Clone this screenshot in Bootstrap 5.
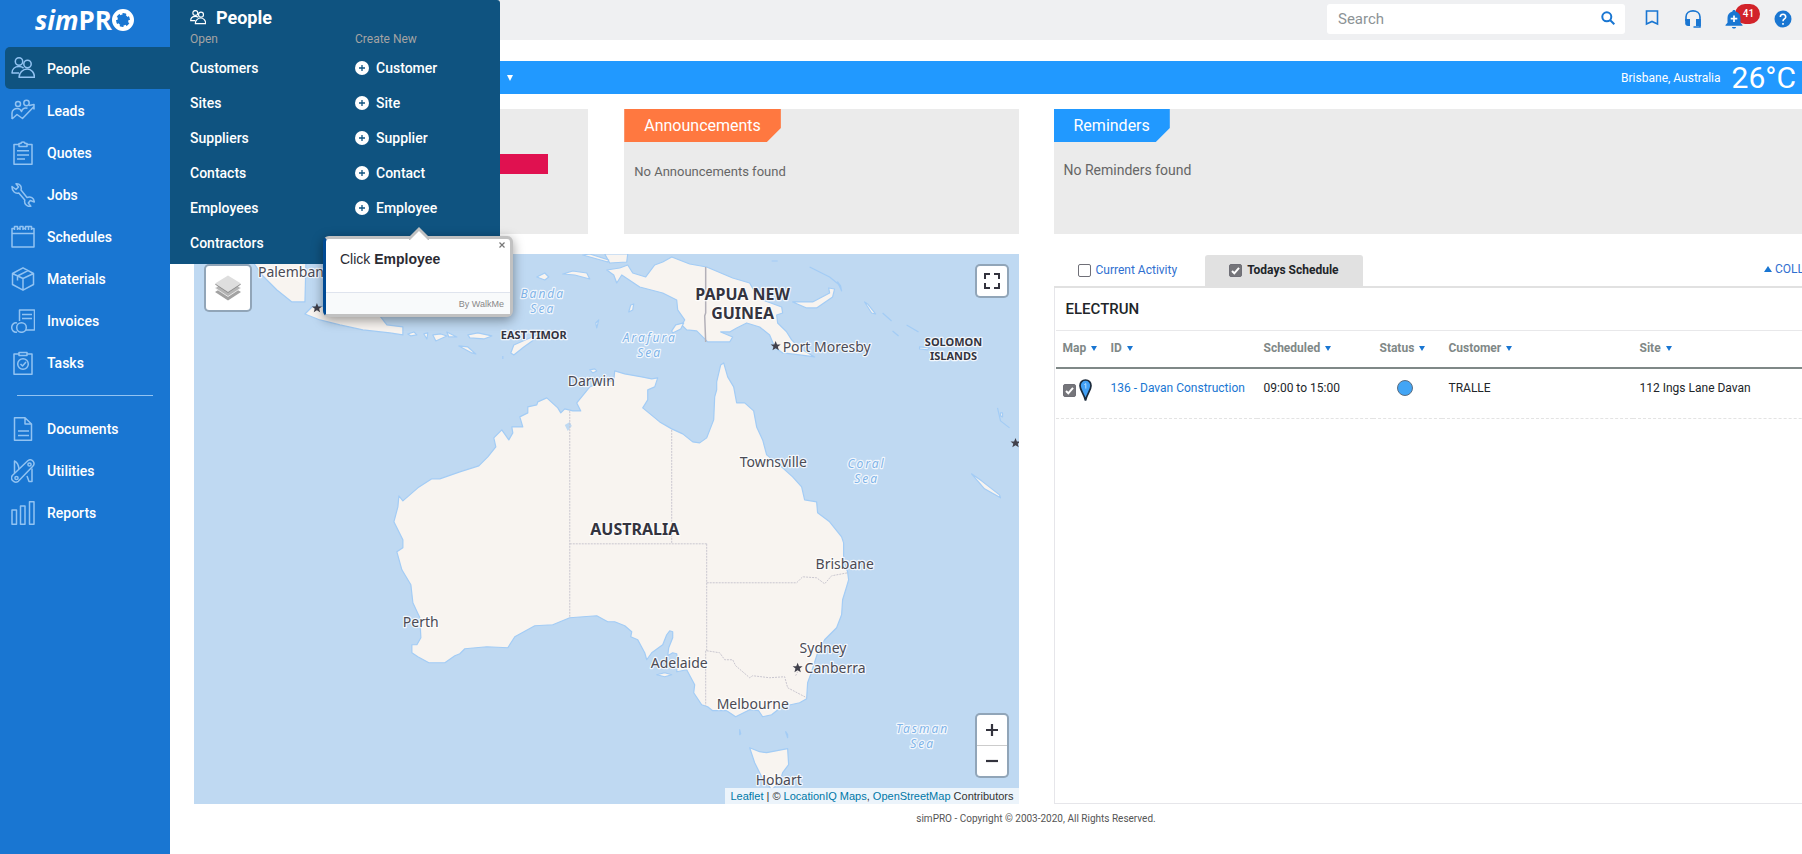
<!DOCTYPE html>
<html lang="en">
<head>
<meta charset="utf-8">
<meta name="viewport" content="width=device-width, initial-scale=1">
<title>simPRO - People</title>
<link href="https://cdn.jsdelivr.net/npm/bootstrap@5.3.0/dist/css/bootstrap.min.css" rel="stylesheet">
<style>
  :root { --sp-blue: #1976d2; --sp-sky: #2199ff; --sp-navy: #0f5380; --sp-grey: #ebebeb; }
  body { font-family: Roboto, sans-serif; font-size: 12px; line-height: 18px; color: #212529; background: #fff; overflow: hidden; }
  a { text-decoration: none; color: var(--sp-blue); }

  /* sidebar */
  .side { width: 170px; background: var(--sp-blue); z-index: 5; }
  .brand-link { height: 47px; padding: 0 0 8px 35px; color: #fff; font: 700 26px/32px "Open Sans", sans-serif; }
  .brand-link svg { width: 22px; height: 22px; }
  .side-nav a { height: 42px; margin-left: 5px; padding: 2px 0 0 6px; gap: 12px; color: #fff; font-size: 14px; font-weight: 500; border-radius: 5px 0 0 5px; }
  .side-nav a.active { background: var(--sp-navy); }
  .side-nav svg { width: 24px; height: 24px; fill: none; stroke: #92c3f2; stroke-width: 1.5; stroke-linejoin: round; }
  .side-rule { height: 1px; margin: 12px 17px 11px; background: #92c3f2; opacity: 1; border: 0; }

  /* flyout */
  .flyout { left: 100%; top: 0; width: 330px; padding: 3px 0 4px 20px; background: var(--sp-navy); color: #fff; border-radius: 0 3px 0 0; }
  .flyout h2 { height: 29px; font-size: 18px; font-weight: 700; gap: 10px; }
  .flyout h2 svg { width: 16px; height: 16px; fill: none; stroke: #fff; stroke-width: 1.8; }
  .flyout-cols { grid-template-columns: 165px 1fr; }
  .flyout h3 { font-size: 12px; line-height: 14px; font-weight: 400; color: #a5a3a3; margin-bottom: 4px; }
  .flyout li a { height: 35px; color: #fff; font-size: 14px; font-weight: 500; gap: 7px; }
  .flyout li svg { width: 14px; height: 14px; }

  /* callout */
  .callout-tip { left: 153px; top: 236px; width: 190px; border: 3px solid #c1c1c1; border-left-color: #004a94; border-radius: 6px; background: #fff; box-shadow: 0 3px 12px rgba(0,0,0,.4); color: #2b2b33; font-family: "Liberation Sans", sans-serif; }
  .callout-tip p { font-size: 14px; line-height: 20px; height: 53px; padding: 10px 14px 0; }
  .callout-tip footer { height: 22px; line-height: 22px; font-size: 9px; padding-right: 6px; color: #888; background: #f8fafb; border-top: 1px solid #dfe4ee; }
  .callout-arrow { left: 83px; top: -13px; width: 20px; height: 14px; }
  .callout-close { right: 3px; top: 1px; width: 10px; height: 10px; color: #777; }

  /* top */
  .topbar { height: 40px; background: #eff0f2; padding-right: 10px; }
  .search-box { width: 298px; height: 30px; margin: 4px 18px 6px 0; background: #fff; border-radius: 3px; padding: 0 10px 0 11px; }
  .search-box input { font-size: 15px; height: 28px; color: #555; }
  .search-box button { margin-bottom: 3px; }
  .search-box input::placeholder { color: #8c9396; opacity: 1; }
  .search-box input:focus { outline: 0; }
  .tools { padding-top: 10px; gap: 23px; }
  .tool-btn { width: 18px; height: 20px; color: var(--sp-blue); }
  .tool-btn svg { width: 18px; height: 20px; display: block; }
  .bell-btn { margin-right: 8px; }
  .count-badge { left: 10px; top: -6px; width: 25px; height: 20px; padding: 0 0 0 2px; line-height: 20px; font-size: 10px; font-weight: 500; border-radius: 10px; background: #d2232a; color: #fff; text-align: center; }
  .weather { height: 33px; margin-top: 21px; background: var(--sp-sky); color: #fff; padding: 0 6px 0 337px; }
  .weather .temp { font-size: 30px; line-height: 33px; margin-left: 11px; }

  /* the dashboard runs on past the right edge of the window */
  .board { margin-right: -100px; padding: 15px 24px 0; }
  .board-halves { grid-template-columns: 1fr 1fr; column-gap: 35px; row-gap: 20px; }
  .board-pair { grid-template-columns: 1fr 1fr; column-gap: 36px; }
  .tile { height: 125px; background: var(--sp-grey); }
  .tile h2 { height: 33px; font-size: 16px; line-height: 33px; font-weight: 400; color: #fff; padding: 0 20px; clip-path: polygon(0 0, 100% 0, 100% 19px, calc(100% - 14px) 100%, 0 100%); }
  .tile p { color: #666; padding: 20px 10px 0; font-size: 13px; line-height: 20px; }
  .tile .wide-note { font-size: 14px; padding-top: 18px; }
  .tag-orange { background: #ff7840; } .tag-sky { background: var(--sp-sky); }
  .alert-strip { height: 20px; margin: 45px 40px 0; background: #e01150; }

  /* map */
  .map-box { aspect-ratio: 3 / 2; background: #bfd9f2; overflow: hidden; }
  .map-box > svg { width: 100%; height: 100%; display: block; font-family: "Noto Sans", sans-serif; }
  .land { fill: #f8f4f0; stroke: #a3ccf5; stroke-width: 1.2; stroke-linejoin: round; }
  .border-line { fill: none; stroke: #c9c6cf; stroke-width: 1; stroke-dasharray: 2 1; }
  .lbl { font-size: 14px; fill: #4b4b55; paint-order: stroke; stroke: rgba(255,255,255,.8); stroke-width: 2.4px; stroke-linejoin: round; }
  .lbl-c { text-anchor: middle; font-weight: 700; fill: #34343f; }
  .lbl-big { font-size: 16px; } .lbl-small { font-size: 11px; }
  .lbl-sea { font-size: 12px; font-style: italic; text-anchor: middle; fill: #7fb4e9; letter-spacing: 2px; }
  .map-ctl { border: 2px solid rgba(0,0,0,.24); background-clip: padding-box; background-color: #fff; border-radius: 5px; color: #33333d; }
  .map-ctl svg { display: block; margin: auto; }
  .ctl-layers { left: 10px; top: 10px; width: 48px; height: 48px; }
  .ctl-full { right: 10px; top: 10px; width: 34px; height: 34px; }
  .ctl-zoom { right: 10px; bottom: 26px; width: 34px; }
  .ctl-zoom button { height: 30px; background: none; color: inherit; }
  .ctl-zoom button + button { height: 31px; border-top: 1px solid #ccc !important; }
  .map-credit { right: 0; bottom: 0; height: 16px; line-height: 16px; padding: 0 5px; background: rgba(255,255,255,.7); font-family: "Liberation Sans", sans-serif; font-size: 11px; color: #333; white-space: nowrap; }
  .map-credit a { color: #0078a8; }

  /* schedule */
  .tabs-row { height: 34px; padding-top: 1px; border-bottom: 2px solid #e1e1e1; }
  .tab-item { padding: 0 24px 1px; gap: 5px; font-size: 12px; color: #2f6fd0; }
  .tab-item.on { background: #e1e1e1; color: #212529; font-weight: 700; border-radius: 3px 3px 0 0; }
  .tick { appearance: none; width: 13px; height: 13px; margin: 0; border: 1px solid #6f6f77; border-radius: 2px; background: #fff; flex: none; }
  .tick:checked { background: #75757a url("data:image/svg+xml,%3Csvg xmlns='http://www.w3.org/2000/svg' viewBox='0 0 11 11'%3E%3Cpath d='M2 6l2.3 2.3L9 2.8' fill='none' stroke='%23fff' stroke-width='2'/%3E%3C/svg%3E") center / 11px no-repeat; }
  .collapse-link { width: 114px; padding-top: 5px; color: #2f6fd0; }
  .tri-dn, .tri-up { display: inline-block; border: 3px solid transparent; border-width: 0 3px; }
  .tri-dn { border-top: 5px solid #1976d2; margin-left: 5px; vertical-align: 1px; }
  .tri-up { border-width: 0 4px 6px; border-bottom-color: #1976d2; margin-right: 3px; vertical-align: 1px; }
  .tri-white { border-top-color: #fff; border-top-width: 6px; }
  .sched { border: 1px solid #e6e6ea; border-top: 0; padding-left: 1px; }
  .sched h2 { font-size: 15px; line-height: 42px; font-weight: 500; padding-left: 10px; border-bottom: 1px solid #e8e8ea; }
  .sched table { table-layout: fixed; }
  .sched th { height: 37px; padding: 0 0 2px 7px; font-weight: 700; color: #7f8887; border-bottom: 2px solid #7f8887; }
  .sched td { height: 50px; padding: 10px 0 0 7px; vertical-align: top; border-bottom: 1px dashed #e3e3e3; }
  .sched td svg { display: block; }
  .pin { margin-left: 3px; }
  .foot { padding-top: 7px; font-size: 10px; line-height: 16px; color: #555; }
</style>
</head>
<body class="min-vh-100 d-flex">

<nav class="side position-relative flex-shrink-0" aria-label="Main">
  <a class="brand-link d-flex align-items-center" href="#"><em>sim</em><span>PR</span><svg viewBox="0 0 22 22" fill="none" stroke="#fff"><circle cx="11" cy="11" r="9" stroke-width="4"/><circle cx="11" cy="11" r="7" stroke-width="3" stroke-dasharray="3 4.3"/></svg></a>
  <div class="side-nav">
    <a class="active d-flex align-items-center" href="#"><svg viewBox="0 0 24 24"><circle cx="8" cy="4.500" r="3.700"/><circle cx="16.500" cy="7" r="3.700"/><path d="M8 16H1c0-4 3-6.500 7-6.500 2 0 3.500.6 4.600 1.600M8 20.300h15.500c0-4.500-3-8.300-7.300-8.300S8 15.800 8 20.300z"/></svg>People</a>
    <a class="d-flex align-items-center" href="#"><svg viewBox="0 0 24 24"><circle cx="7" cy="5" r="2.500"/><circle cx="15.500" cy="4" r="2.700"/><path d="M1 20v-6c0-3 3-4.500 5-4.500 3 0 4 1.500 4.500 3 1-3 3.500-4 6-3.300M1 20l5-4.500 5.500 4L23 7.500M18 6.500l5-1v5"/></svg>Leads</a>
    <a class="d-flex align-items-center" href="#"><svg viewBox="0 0 24 24"><path d="M8 3.500H3v19.700h18V3.500h-5M8 5.500h8v-3h-2C14 .5 10 .5 10 2.500H8zM6 9.800h12M6 14h12M6 18h8"/></svg>Quotes</a>
    <a class="d-flex align-items-center" href="#"><svg viewBox="0 0 24 24"><path d="M1 3.500l4 3 2.500-2.500L5 .8C9 .5 11 3.500 10 7l6 7.500c3.500-1.500 7 .5 7.300 4.500l-4-1.500-2 2.500 2.500 3.300c-4 .7-7-2.500-6-6.300l-6-7C4 11 .8 8 1 3.500z"/></svg>Jobs</a>
    <a class="d-flex align-items-center" href="#"><svg viewBox="0 0 24 24"><path d="M3.500 3.500H1V22h22V3.500h-2.500M1 8.500h22M3.500 5V1.500h3V5M6.500 3.500H9M9 5V1.500h3V5M12 3.500h2.500M14.500 5V1.500h3V5M17.500 5V1.500h3V5"/></svg>Schedules</a>
    <a class="d-flex align-items-center" href="#"><svg viewBox="0 0 24 24"><path d="M12 .8l10.500 5.700v11L12 23.200 1.500 17.500v-11zM1.500 6.500L12 11.500l10.500-5M12 11.500v11.700M6.500 9L17 3.700M6.500 9v4.500"/></svg>Materials</a>
    <a class="d-flex align-items-center" href="#"><svg viewBox="0 0 24 24"><path d="M8.500 12V1h15v20H15M11 5.500h10M11 9.500h10"/><circle cx="10.500" cy="18.500" r="4.800"/><path d="M6 14c-3-.8-5.300 1.500-5.300 4.500s2.300 5.300 5.300 4.500"/></svg>Invoices</a>
    <a class="d-flex align-items-center" href="#"><svg viewBox="0 0 24 24"><path d="M8 3H3v20.200h18V3h-5M8 4.500h8v-3H8z"/><circle cx="12" cy="13" r="5.300"/><path d="M9.500 13l2 2 3.500-4"/></svg>Tasks</a>
    <hr class="side-rule">
    <a class="d-flex align-items-center" href="#"><svg viewBox="0 0 24 24"><path d="M3.500.8H14L20.500 7v16.200h-17zM14 .8V7h6.500M7 14h11M7 18.500h11"/></svg>Documents</a>
    <a class="d-flex align-items-center" href="#"><svg viewBox="0 0 24 24"><path d="M1.300 16.500L16.500 2c4-3.500 8.500 2 5.300 5.300L7.300 22.300c-4 2.700-8.500-2-6-5.800z"/><circle cx="18.500" cy="5.500" r="1.600"/><circle cx="5.500" cy="19" r="1.600"/><path d="M3.500 14V2c2.500 1 4 4 4.500 8M21 9.500v13h-3l-2-5.500"/></svg>Utilities</a>
    <a class="d-flex align-items-center" href="#"><svg viewBox="0 0 24 24"><path d="M1 9h4.500v14.200H1zM9.500 5H14v18.200H9.500zM18.500.8H23v22.400h-4.500z"/></svg>Reports</a>
  </div>

  <section class="flyout position-absolute">
    <h2 class="d-flex align-items-center m-0"><svg viewBox="0 0 24 24"><circle cx="8" cy="4.500" r="3.700"/><circle cx="16.500" cy="7" r="3.700"/><path d="M8 16H1c0-4 3-6.500 7-6.500 2 0 3.500.6 4.600 1.600M8 20.300h15.500c0-4.500-3-8.300-7.300-8.300S8 15.800 8 20.300z"/></svg>People</h2>
    <div class="flyout-cols d-grid">
      <div>
        <h3>Open</h3>
        <ul class="list-unstyled m-0">
          <li><a class="d-flex align-items-center" href="#">Customers</a></li>
          <li><a class="d-flex align-items-center" href="#">Sites</a></li>
          <li><a class="d-flex align-items-center" href="#">Suppliers</a></li>
          <li><a class="d-flex align-items-center" href="#">Contacts</a></li>
          <li><a class="d-flex align-items-center" href="#">Employees</a></li>
          <li><a class="d-flex align-items-center" href="#">Contractors</a></li>
        </ul>
      </div>
      <div>
        <h3>Create New</h3>
        <ul class="list-unstyled m-0">
          <li><a class="d-flex align-items-center" href="#"><svg viewBox="0 0 14 14"><circle cx="7" cy="7" r="7" fill="#fff"/><path d="M7 4v6M4 7h6" stroke="#0f5380" stroke-width="1.300"/></svg>Customer</a></li>
          <li><a class="d-flex align-items-center" href="#"><svg viewBox="0 0 14 14"><circle cx="7" cy="7" r="7" fill="#fff"/><path d="M7 4v6M4 7h6" stroke="#0f5380" stroke-width="1.300"/></svg>Site</a></li>
          <li><a class="d-flex align-items-center" href="#"><svg viewBox="0 0 14 14"><circle cx="7" cy="7" r="7" fill="#fff"/><path d="M7 4v6M4 7h6" stroke="#0f5380" stroke-width="1.300"/></svg>Supplier</a></li>
          <li><a class="d-flex align-items-center" href="#"><svg viewBox="0 0 14 14"><circle cx="7" cy="7" r="7" fill="#fff"/><path d="M7 4v6M4 7h6" stroke="#0f5380" stroke-width="1.300"/></svg>Contact</a></li>
          <li><a class="d-flex align-items-center" href="#"><svg viewBox="0 0 14 14"><circle cx="7" cy="7" r="7" fill="#fff"/><path d="M7 4v6M4 7h6" stroke="#0f5380" stroke-width="1.300"/></svg>Employee</a></li>
        </ul>
      </div>
    </div>
    <div class="callout-tip position-absolute" role="dialog" aria-label="Hint">
      <svg class="callout-arrow position-absolute" viewBox="0 0 20 14"><path d="M0 11L10 1l10 10v3H0z" fill="#c1c1c1"/><path d="M1 14L10 5l9 9z" fill="#fff"/></svg>
      <button class="callout-close position-absolute border-0 bg-transparent p-0 d-flex" type="button" aria-label="Close"><svg class="m-auto" width="6" height="6" viewBox="0 0 6 6"><path d="M.5.5l5 5m0-5l-5 5" stroke="currentColor" stroke-width="1.200"/></svg></button>
      <p class="m-0">Click <b>Employee</b></p>
      <footer class="text-end">By WalkMe</footer>
    </div>
  </section>
</nav>

<div class="flex-grow-1 overflow-hidden">
  <header class="topbar d-flex justify-content-end">
    <form class="search-box d-flex align-items-center">
      <input class="border-0 bg-transparent p-0 flex-grow-1" type="text" placeholder="Search" aria-label="Search">
      <button class="border-0 bg-transparent p-0 d-flex" type="button" aria-label="Search"><svg width="14" height="14" viewBox="0 0 14 14" fill="none" stroke="#1976d2" stroke-width="2"><circle cx="5.800" cy="5.800" r="4.500"/><path d="M9 9l4.300 4.300"/></svg></button>
    </form>
    <div class="tools d-flex align-items-start">
      <button class="tool-btn border-0 bg-transparent p-0" type="button" aria-label="Bookmarks"><svg viewBox="0 0 18 20"><path d="M3.500 1h11v13L9 11.500 3.500 14z" fill="none" stroke="currentColor" stroke-width="1.600"/></svg></button>
      <button class="tool-btn border-0 bg-transparent p-0" type="button" aria-label="Support"><svg viewBox="0 0 18 20" fill="none" stroke="currentColor" stroke-width="1.600"><path d="M2 11V7C2-1.200 16-1.200 16 7v10H9.500"/><path d="M1.200 9H6v7H4c-1.600 0-2.800-1-2.800-2.500zM12 9h4.800v7H12z" fill="currentColor" stroke="none"/></svg></button>
      <button class="tool-btn bell-btn border-0 bg-transparent p-0 position-relative" type="button" aria-label="Notifications"><span class="count-badge position-absolute">41</span><svg class="position-relative" viewBox="0 0 18 20"><path d="M9 0c1 0 1.600.7 1.600 1.500C14 2.300 15.500 5 15.500 8v4.800L17.500 15v.8H.5V15l2-2.200V8c0-3 1.500-5.700 4.900-6.500C7.400.7 8 0 9 0zM7 17h4c0 2-4 2-4 0z" fill="currentColor"/><path d="M9 5.500v6.500M5.700 8.700h6.600" stroke="#fff" stroke-width="1.700"/></svg></button>
      <button class="tool-btn border-0 bg-transparent p-0" type="button" aria-label="Help"><svg viewBox="0 0 18 20"><circle cx="9" cy="9" r="8.500" fill="currentColor"/><path d="M6.300 7c0-3.600 5.400-3.600 5.400 0 0 2-2.700 2-2.700 4.200M9 13v1.800" fill="none" stroke="#fff" stroke-width="1.600"/></svg></button>
    </div>
  </header>

  <div class="weather d-flex align-items-center">
    <button class="border-0 bg-transparent p-0 d-flex" type="button" aria-label="Choose dashboard"><span class="tri-dn tri-white m-0"></span></button>
    <span class="ms-auto">Brisbane, Australia</span>
    <span class="temp">26°C</span>
  </div>

  <main class="board">
    <div class="board-halves d-grid">
      <div class="board-pair d-grid">
        <section class="tile overflow-hidden"><div class="alert-strip"></div></section>
        <section class="tile"><h2 class="tag-orange d-inline-block m-0 align-top">Announcements</h2><p class="m-0">No Announcements found</p></section>
      </div>
      <section class="tile"><h2 class="tag-sky d-inline-block m-0 align-top">Reminders</h2><p class="wide-note m-0">No Reminders found</p></section>

      <section class="map-box position-relative" aria-label="Map">
        <svg viewBox="194 254 825 550" preserveAspectRatio="xMidYMid slice">
          <g class="land">
            <path d="M590 387L586 392 577 403 581 411 573 411 565 409 561 413 558 408 547 398 538 402 537 405 528 407 528 413 520 417 523 427 512 427 513 433 509 440 502 430 494 438 496 447 488 457 479 466 460 472 440 479 432 479 418 488 403 501 399 496 398 507 394 522 403 540 403 548 397 552 402 570 411 585 413 603 420 618 421 638 417 645 412 645 412 653 418 657 429 663 445 663 455 656 460 654 465 649 487 647 508 648 515 637 535 626 553 625 570 618 597 616 608 622 615 622 625 626 632 632 631 637 638 640 645 653 647 660 652 653 663 645 667 635 670 631 673 632 673 638 669 648 668 656 673 653 677 654 678 662 677 672 687 670 695 685 694 693 702 705 708 707 713 711 727 711 736 717 750 710 759 711 763 717 772 715 782 707 800 703 807 699 808 683 812 672 818 653 825 640 837 628 842 615 843 600 847 587 849 580 848 572 844 562 844 543 842 537 830 522 818 513 817 502 805 500 802 487 793 477 783 468 767 455 763 440 757 427 754 411 745 403 737 403 734 387 728 377 724 363 721 365 717 382 717 390 715 397 714 420 707 438 700 443 693 442 683 434 672 429 660 422 643 408 648 400 648 390 655 387 658 378 652 379 642 377 625 374 615 371 614 381 602 382z"/>
            <path d="M607 270L620 268 628 265 633 273 646 277 655 265 663 262 672 257 690 264 707 267 733 278 750 283 754 290 763 300 782 307 783 313 777 315 778 323 787 332 792 340 800 348 815 357 800 355 783 353 775 347 770 335 760 327 747 323 737 328 730 332 721 332 733 337 730 342 708 342 697 331 687 330 682 325 685 320 678 310 677 300 663 293 640 287 628 279 622 275 617 283 614 275z"/>
            <path d="M793 302L813 302 830 293 829 288 835 289 833 297 817 308 807 308zM605 254H628L627 262 610 263zM672 331L676 325 684 323 681 329 673 333zM629 312L631 305 634 304 633 310zM865 302L868 304 876 314 872 313zM838 282L841 286 842 291zM920 347L930 348 928 350 920 349z"/>
            <path d="M253 262L262 275 277 290 292 302 305 302 306 262zM305 314L312 307 330 306 380 316 387 325 403 327 403 335 390 333 363 330 340 325 320 320zM408 334L414 332 417 335 411 336zM424 334L428 333 427 339zM433 335L441 334 447 336 436 341zM447 332L453 335 457 337 449 337zM468 335L478 333 492 336 484 339 470 338zM459 346L468 347 476 354 472 353zM511 353L514 345 530 338 545 332 524 347 514 355zM537 277L545 273 549 277 545 280zM563 274L573 271 587 273 590 279 575 275zM596 323L599 320 597 328zM590 370L595 369 597 371 593 373zM583 255L590 254 609 260 608 262z"/>
            <path d="M750 748L760 752 767 753 788 749 789 765 783 773 780 783 772 790 762 777 755 763zM657 675L665 673 672 675 665 677zM972 474L982 481 1000 495 1001 498 985 489zM1001 413L1003 413 1003 417 1001 416zM786 732L788 735 788 738zM740 730L741 734 740 735z"/>
            <path d="M810 267L830 277 841 286M883 313L892 321M907 325L919 332M893 331L899 336M998 408L1001 421 1010 428M503 356V359M772 261H778" fill="none"/>
          </g>
          <g fill="#bfd9f2"><path d="M565 425l5-3 2 4-4 5zM505 410l6-2-3 5z"/></g>
          <path class="border-line" d="M570 411V618M570 544H707M672 430V544M707 544V651M706 651V706M707 583H797L803 577 817 578 825 584 832 576 848 573M707 651L720 653 725 660 733 660 736 666 750 678 753 676 770 678 785 677 788 688 807 698M796 676L798 672"/>
          <path d="M706 267V313L705 316 706 342" fill="none" stroke="#b3b0b8" stroke-width="1.500"/>
          <g class="lbl">
            <text x="258" y="277">Palembang</text><text x="568" y="386">Darwin</text><text x="783" y="352">Port Moresby</text>
            <text x="740" y="467">Townsville</text><text x="816" y="569">Brisbane</text><text x="800" y="653">Sydney</text>
            <text x="805" y="673">Canberra</text><text x="717" y="709">Melbourne</text><text x="651" y="668">Adelaide</text>
            <text x="403" y="627">Perth</text><text x="756" y="785">Hobart</text>
          </g>
          <g class="lbl lbl-c lbl-big"><text x="743" y="300">PAPUA NEW</text><text x="743" y="319">GUINEA</text><text x="635" y="535">AUSTRALIA</text></g>
          <g class="lbl lbl-c lbl-small"><text x="534" y="339">EAST TIMOR</text><text x="954" y="346">SOLOMON</text><text x="954" y="360">ISLANDS</text></g>
          <g class="lbl lbl-sea"><text x="543" y="298">Banda</text><text x="543" y="313">Sea</text><text x="650" y="342">Arafura</text><text x="650" y="357">Sea</text><text x="867" y="468">Coral</text><text x="867" y="483">Sea</text><text x="923" y="733">Tasman</text><text x="923" y="748">Sea</text></g>
          <defs><path id="star" d="M0-5L1.400-1.500 5-1.400 2.200.8 3.200 4.400 0 2.400-3.200 4.400-2.200.8-5-1.400-1.400-1.500z" fill="#41414c"/></defs>
          <use href="#star" x="317" y="308"/><use href="#star" x="776" y="346"/><use href="#star" x="798" y="668"/><use href="#star" x="1016" y="443"/>
        </svg>
        <button class="map-ctl ctl-layers position-absolute p-0" type="button" aria-label="Layers"><svg width="28" height="28" viewBox="0 0 28 28"><path d="M1 18l13-8 13 8-13 8.500z" fill="#a2a2a2"/><path d="M1 14l13-8 13 8-13 8.500z" fill="#b4b4b4" stroke="#f4f4f4" stroke-width=".8"/><path d="M1 10.500L14 2.500l13 8L14 19z" fill="#8d8d8d"/><path d="M1 9.500L14 1.500l13 8L14 18z" fill="#dedede"/></svg></button>
        <button class="map-ctl ctl-full position-absolute p-0" type="button" aria-label="Full screen"><svg width="16" height="16" viewBox="0 0 16 16" fill="none" stroke="currentColor" stroke-width="2"><path d="M1 6V1h5M10 1h5v5M15 10v5h-5M6 15H1v-5"/></svg></button>
        <div class="map-ctl ctl-zoom position-absolute d-flex flex-column">
          <button class="border-0 p-0" type="button" aria-label="Zoom in"><svg width="12" height="12" viewBox="0 0 12 12"><path d="M6 0v12M0 6h12" stroke="currentColor" stroke-width="2.200"/></svg></button>
          <button class="border-0 p-0" type="button" aria-label="Zoom out"><svg width="12" height="12" viewBox="0 0 12 12"><path d="M0 6h12" stroke="currentColor" stroke-width="2.200"/></svg></button>
        </div>
        <div class="map-credit position-absolute"><a href="#">Leaflet</a> | © <a href="#">LocationIQ Maps</a>, <a href="#">OpenStreetMap</a> Contributors</div>
      </section>

      <section class="d-flex flex-column">
        <div class="tabs-row d-flex">
          <label class="tab-item d-flex align-items-center"><input class="tick" type="checkbox">Current Activity</label>
          <label class="tab-item on d-flex align-items-center ms-1"><input class="tick" type="checkbox" checked>Todays Schedule</label>
          <a class="collapse-link ms-auto text-nowrap" href="#"><span class="tri-up"></span>COLLAPSE</a>
        </div>
        <div class="sched flex-grow-1">
          <h2 class="m-0">ELECTRUN</h2>
          <table class="w-100">
            <colgroup><col style="width:48px"><col style="width:153px"><col style="width:116px"><col style="width:69px"><col style="width:191px"><col></colgroup>
            <thead><tr><th>Map<span class="tri-dn"></span></th><th>ID<span class="tri-dn"></span></th><th>Scheduled<span class="tri-dn"></span></th><th>Status<span class="tri-dn"></span></th><th>Customer<span class="tri-dn"></span></th><th>Site<span class="tri-dn"></span></th></tr></thead>
            <tbody><tr>
              <td><span class="d-flex align-items-center"><input class="tick" type="checkbox" checked aria-label="Show job 136 on the map"><svg class="pin" width="13" height="23" viewBox="0 0 13 23"><path d="M6.500 1C3.200 1 1 3.500 1 6.800c0 4.200 4 8 5.500 14.700C8 14.800 12 11 12 6.800 12 3.500 9.800 1 6.500 1z" fill="#42a0f5" stroke="#1c2a3a" stroke-width="1.700"/><path d="M5.300 5.600l1.500-1v5" fill="none" stroke="#b5dafb"/></svg></span></td>
              <td><a href="#">136 - Davan Construction</a></td>
              <td>09:00 to 15:00</td>
              <td><svg class="ms-3" width="18" height="18" viewBox="0 0 18 18"><circle cx="9" cy="9" r="7.500" fill="#42a5f5" stroke="#5b6d80"/></svg></td>
              <td>TRALLE</td>
              <td>112 Ings Lane Davan</td>
            </tr></tbody>
          </table>
        </div>
      </section>
    </div>
    <footer class="foot text-center">simPRO - Copyright © 2003-2020, All Rights Reserved.</footer>
  </main>
</div>
<script src="https://cdn.jsdelivr.net/npm/bootstrap@5.3.0/dist/js/bootstrap.bundle.min.js"></script>
</body>
</html>
